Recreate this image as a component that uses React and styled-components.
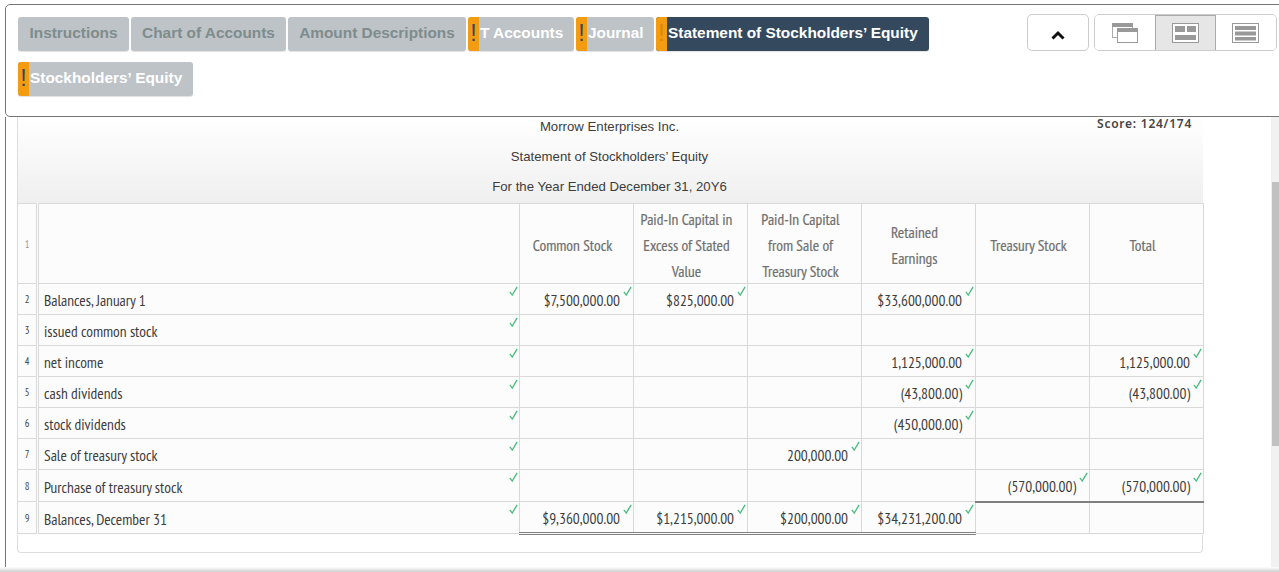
import React from "react";
import styled, { createGlobalStyle } from "styled-components";

const narrow = `"PT Sans Narrow", "Liberation Sans Narrow", "Roboto Condensed", "Liberation Sans", sans-serif`;

const tabs = [
  { label: "Instructions", width: 111 },
  { label: "Chart of Accounts", width: 155 },
  { label: "Amount Descriptions", width: 178 },
  { label: "T Accounts", width: 106, alert: true },
  { label: "Journal", width: 78, alert: true },
  { label: "Statement of Stockholders’ Equity", width: 273, alert: true, active: true },
  { label: "Stockholders’ Equity", width: 175, alert: true },
];

const columns = [
  ["Common Stock"],
  ["Paid-In Capital in", "Excess of Stated", "Value"],
  ["Paid-In Capital", "from Sale of", "Treasury Stock"],
  ["Retained", "Earnings"],
  ["Treasury Stock"],
  ["Total"],
];

const rows = [
  { n: 2, label: "Balances, January 1", height: 31, values: ["$7,500,000.00", "$825,000.00", "", "$33,600,000.00", "", ""] },
  { n: 3, label: "issued common stock", height: 31, values: ["", "", "", "", "", ""] },
  { n: 4, label: "net income", height: 31, values: ["", "", "", "1,125,000.00", "", "1,125,000.00"] },
  { n: 5, label: "cash dividends", height: 31, values: ["", "", "", "(43,800.00)", "", "(43,800.00)"] },
  { n: 6, label: "stock dividends", height: 31, values: ["", "", "", "(450,000.00)", "", ""] },
  { n: 7, label: "Sale of treasury stock", height: 31, values: ["", "", "200,000.00", "", "", ""] },
  { n: 8, label: "Purchase of treasury stock", height: 32, underline: [4, 5], values: ["", "", "", "", "(570,000.00)", "(570,000.00)"] },
  { n: 9, label: "Balances, December 31", height: 32, total: [0, 1, 2, 3], values: ["$9,360,000.00", "$1,215,000.00", "$200,000.00", "$34,231,200.00", "", ""] },
];

function Check() {
  return (
    <CheckMark viewBox="0 0 10 11" width="9" height="10">
      <path d="M1 6.5 L3.6 10 L9 1" fill="none" stroke="#4dbd80" strokeWidth="1.5" />
    </CheckMark>
  );
}

function ChevronIcon() {
  return (
    <svg width="14" height="10" viewBox="0 0 14 10">
      <path d="M1.5 8.5 L7 3 L12.5 8.5" fill="none" stroke="#111" strokeWidth="3" />
    </svg>
  );
}

function WindowsIcon() {
  return (
    <svg width="26" height="20" viewBox="0 0 26 20">
      <rect x="0.5" y="0.5" width="20" height="14" fill="#fff" stroke="#aaa" />
      <rect x="0" y="0" width="21" height="4" fill="#999" />
      <rect x="5.5" y="5.5" width="20" height="14" fill="#fff" stroke="#999" />
      <rect x="5" y="5" width="21" height="4" fill="#999" />
    </svg>
  );
}

function SplitIcon() {
  return (
    <svg width="27" height="20" viewBox="0 0 27 20">
      <rect x="0.5" y="0.5" width="26" height="19" fill="#fff" stroke="#999" />
      <rect x="3" y="3" width="10" height="6" fill="#999" />
      <rect x="15" y="3" width="9" height="6" fill="#999" />
      <rect x="3" y="12" width="21" height="5" fill="#999" />
    </svg>
  );
}

function StackIcon() {
  return (
    <svg width="27" height="20" viewBox="0 0 27 20">
      <rect x="0.5" y="0.5" width="26" height="19" fill="#fff" stroke="#999" />
      <rect x="3" y="3" width="21" height="4" fill="#999" />
      <rect x="3" y="8.5" width="21" height="4" fill="#999" />
      <rect x="3" y="14" width="21" height="3.5" fill="#999" />
    </svg>
  );
}

export default function App() {
  return (
    <Page>
      <GlobalStyle />
      <Header>
        <TabList>
          {tabs.map((tab) => (
            <Tab key={tab.label} $width={tab.width} $alert={tab.alert} $active={tab.active}>
              {tab.alert && <AlertStrip $active={tab.active}>!</AlertStrip>}
              <TabLabel>{tab.label}</TabLabel>
            </Tab>
          ))}
        </TabList>
        <Controls>
          <CollapseButton>
            <ChevronIcon />
          </CollapseButton>
          <ViewGroup>
            <ViewButton><WindowsIcon /></ViewButton>
            <ViewButton $active><SplitIcon /></ViewButton>
            <ViewButton><StackIcon /></ViewButton>
          </ViewGroup>
        </Controls>
      </Header>
      <Body>
        <Panel>
          <TitleBlock>
            <TitleLines>
              <div>Morrow Enterprises Inc.</div>
              <div>Statement of Stockholders’ Equity</div>
              <div>For the Year Ended December 31, 20Y6</div>
            </TitleLines>
            <Score>Score: 124/174</Score>
          </TitleBlock>
          <Sheet>
            <colgroup>
              <col width="20" />
              <col width="482" />
              {columns.map((c) => (
                <col key={c[0]} width="114" />
              ))}
            </colgroup>
            <tbody>
              <tr>
                <NumCell $height={80}>1</NumCell>
                <LabelCell />
                {columns.map((lines) => (
                  <HeadCell key={lines[0]}>
                    {lines.map((line) => (
                      <div key={line}>{line}</div>
                    ))}
                  </HeadCell>
                ))}
              </tr>
              {rows.map((row) => (
                <tr key={row.n}>
                  <NumCell $height={row.height} $dark>{row.n}</NumCell>
                  <LabelCell>
                    {row.label}
                    <Check />
                  </LabelCell>
                  {row.values.map((value, i) => (
                    <ValueCell
                      key={i}
                      $underline={row.underline && row.underline.includes(i)}
                      $total={row.total && row.total.includes(i)}
                    >
                      {value}
                      {value && <Check />}
                    </ValueCell>
                  ))}
                </tr>
              ))}
            </tbody>
          </Sheet>
          <PanelFoot />
        </Panel>
        <ScrollTrack>
          <ScrollThumb />
        </ScrollTrack>
      </Body>
      <BottomShade />
    </Page>
  );
}

const GlobalStyle = createGlobalStyle`
  html, body {
    margin: 0;
    padding: 0;
    background: #fff;
    overflow: hidden;
  }
`;

const Page = styled.div`
  position: relative;
  width: 1279px;
  height: 572px;
  padding-top: 4px;
  box-sizing: border-box;
  overflow: hidden;
  font-family: "Liberation Sans", Arial, sans-serif;
`;

const Header = styled.div`
  margin-left: 5px;
  width: 1280px;
  height: 113px;
  box-sizing: border-box;
  border: 1px solid #777;
  border-radius: 5px;
  display: flex;
  align-items: flex-start;
  padding: 9px 0 0 12px;
  background: #fff;
`;

const TabList = styled.div`
  width: 960px;
  display: flex;
  flex-wrap: wrap;
  column-gap: 2px;
  row-gap: 11px;
  padding-top: 3px;
`;

const Tab = styled.div`
  width: ${(p) => p.$width}px;
  height: 34px;
  box-sizing: border-box;
  display: flex;
  align-items: center;
  justify-content: ${(p) => (p.$alert ? "flex-start" : "center")};
  border-radius: 3px;
  overflow: hidden;
  font-size: 15.4px;
  font-weight: bold;
  white-space: nowrap;
  background: ${(p) => (p.$active ? "#34495e" : "#bdc3c7")};
  color: ${(p) => (p.$active || p.$alert ? "#fff" : "#7f8c8d")};
  box-shadow: 0 1px 1px rgba(0, 0, 0, 0.12);
`;

const TabLabel = styled.span`
  padding-bottom: 2px;
`;

const AlertStrip = styled.span`
  width: 11px;
  height: 100%;
  flex: none;
  margin-right: 1px;
  display: flex;
  align-items: center;
  justify-content: center;
  padding-bottom: 2px;
  box-sizing: border-box;
  background: #f39c12;
  color: ${(p) => (p.$active ? "#d9860c" : "#34495e")};
  font-size: 23px;
  font-weight: normal;
`;

const Controls = styled.div`
  margin-left: 49px;
  display: flex;
  gap: 5px;
`;

const CollapseButton = styled.div`
  width: 62px;
  height: 37px;
  box-sizing: border-box;
  border: 1px solid #ccc;
  border-radius: 5px;
  display: flex;
  align-items: center;
  justify-content: center;
  padding-top: 5px;
`;

const ViewGroup = styled.div`
  display: flex;
  width: 183px;
  height: 37px;
  box-sizing: border-box;
  border: 1px solid #ccc;
  border-radius: 5px;
  overflow: hidden;
`;

const ViewButton = styled.div`
  flex: 1;
  display: flex;
  align-items: center;
  justify-content: center;
  padding-top: 1px;
  background: ${(p) => (p.$active ? "#e6e6e6" : "#fff")};
  box-shadow: ${(p) => (p.$active ? "inset 1px 1px 0 #aaa, inset -1px 0 0 #aaa" : "none")};
`;

const Body = styled.div`
  margin-left: 5px;
  height: 451px;
  border-left: 1px solid #777;
  display: flex;
  justify-content: space-between;
`;

const Panel = styled.div`
  margin-left: 11px;
  width: 1186px;
  height: 436px;
  box-sizing: border-box;
  display: flex;
  flex-direction: column;
`;

const TitleBlock = styled.div`
  height: 86px;
  flex: none;
  display: grid;
  border-left: 1px solid #ddd;
  background: linear-gradient(#fff, #efefef);
  color: #3c3c3c;
  font-size: 13.2px;
`;

const TitleLines = styled.div`
  grid-area: 1 / 1;
  text-align: center;
  line-height: 30px;
  margin-top: -5px;
  padding-right: 2px;
`;

const Score = styled.div`
  grid-area: 1 / 1;
  justify-self: end;
  margin: 0 11px 0 0;
  font-family: "Noto Sans", sans-serif;
  font-size: 12px;
  font-weight: 600;
  letter-spacing: 0.75px;
  line-height: 14px;
  color: #444;
`;

const Sheet = styled.table`
  width: 1186px;
  flex: none;
  table-layout: fixed;
  border-collapse: collapse;
  font-family: ${narrow};
  background: #fcfcfc;
  & td {
    border: 1px solid #d9d9d9;
    padding: 0;
  }
`;

const NumCell = styled.td`
  height: ${(p) => p.$height}px;
  box-sizing: border-box;
  text-align: center;
  font-size: 10.5px;
  color: ${(p) => (p.$dark ? "#444" : "#999")};
  && {
    border-right: 3px double #d9d9d9;
  }
`;

const LabelCell = styled.td`
  position: relative;
  font-size: 15.5px;
  color: #3c3c3c;
  && {
    padding: 2px 0 0 5px;
  }
`;

const HeadCell = styled.td`
  text-align: center;
  font-size: 15.5px;
  line-height: 26px;
  color: #6f6f6f;
  -webkit-text-stroke: 0.2px #6f6f6f;
  && {
    padding: 1px 8px 0 0;
  }
  & > div:last-child {
    margin-bottom: -1px;
  }
`;

const ValueCell = styled.td`
  position: relative;
  text-align: right;
  font-size: 15.4px;
  color: #3c3c3c;
  && {
    padding: 2px 13px 0 0;
    ${(p) => p.$underline && "border-bottom: 2px solid #808080;"}
    ${(p) => p.$total && "border-bottom: 3px double #808080;"}
  }
`;

const CheckMark = styled.svg`
  position: absolute;
  top: 2px;
  right: 1px;
`;

const PanelFoot = styled.div`
  flex: 1;
  border: 1px solid #ddd;
  border-top: none;
  border-radius: 0 0 4px 4px;
`;

const ScrollTrack = styled.div`
  width: 8px;
  height: 100%;
  background: #f1f1f1;
`;

const ScrollThumb = styled.div`
  margin: 65px 0 0 1px;
  height: 264px;
  background: #c1c1c1;
`;

const BottomShade = styled.div`
  position: absolute;
  left: 0;
  right: 0;
  bottom: 0;
  height: 5px;
  background: linear-gradient(#fff, #cfcfcf);
`;
